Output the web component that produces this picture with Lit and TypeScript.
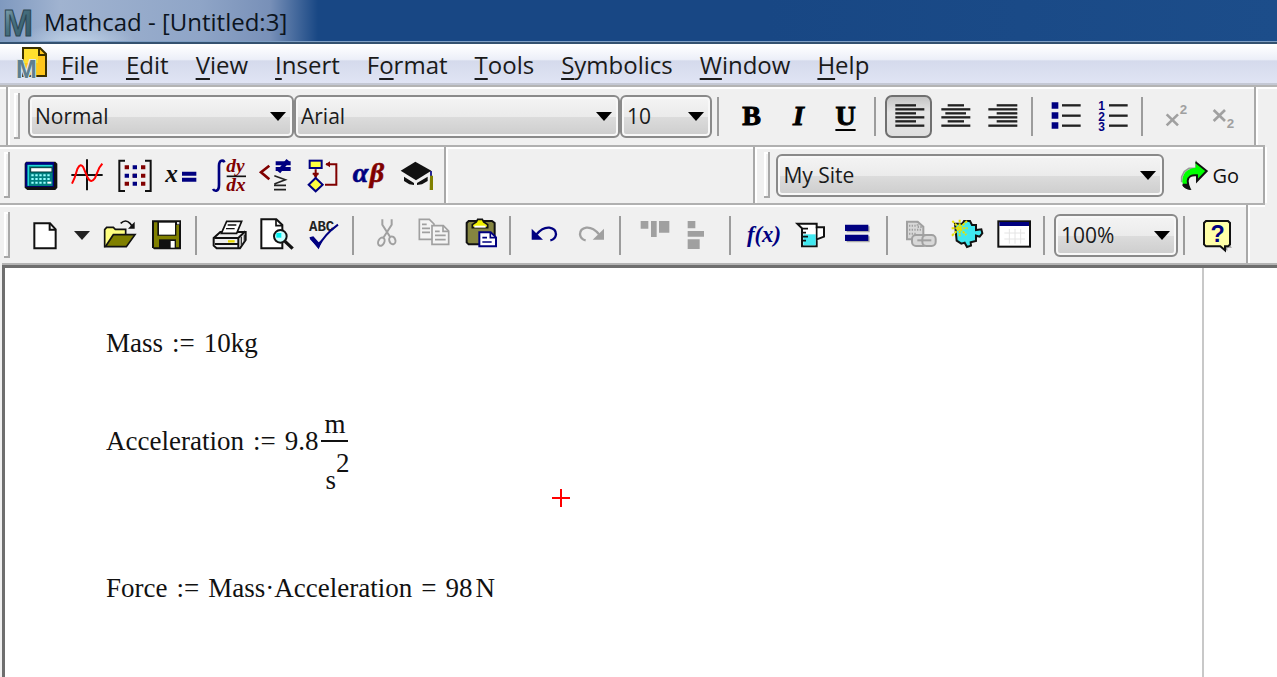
import { LitElement, html, svg, css, SVGTemplateResult, TemplateResult } from "lit";
import { customElement, property } from "lit/decorators.js";

/** Icon drawn on a 108-unit square grid centred on (cx, cy). */
const icon = (cx: number, cy: number, body: SVGTemplateResult) =>
  html`<svg class="icon" viewBox="${cx - 54} ${cy - 54} 108 108" aria-hidden="true">${body}</svg>`;

const lines = (x1: number[], x2: number[], y: number[]) =>
  svg`${y.map((v, i) => svg`<path d="M${x1[i]} ${v}H${x2[i]}" stroke="#222" stroke-width="7"/>`)}`;

const icons = {
  alignLeft: icon(152, 93, lines([111, 111, 111, 111, 111, 111], [173, 198, 173, 198, 173, 198], [61, 73, 85, 97, 109, 122])),
  alignCenter: icon(291, 93, lines([266, 247, 259, 247, 266, 247], [315, 334, 321, 334, 315, 334], [61, 73, 85, 97, 109, 122])),
  alignRight: icon(432, 93, lines([413, 388, 413, 388, 413, 388], [475, 475, 475, 475, 475, 475], [61, 73, 85, 97, 109, 122])),
  bullets: icon(621, 93, svg`
    <path d="M578 52h20v19h-20zM578 82h20v19h-20zM578 112h20v19h-20z" fill="#000080"/>
    ${lines([609, 609, 609], [665, 665, 665], [61, 92, 122])}`),
  numbers: icon(762, 93, svg`
    <g font-family="Liberation Sans" font-weight="bold" font-size="36" fill="#000080" text-anchor="middle">
      <text x="728" y="76">1</text><text x="728" y="107">2</text><text x="728" y="138">3</text></g>
    ${lines([750, 750, 750], [806, 806, 806], [61, 92, 122])}`),
  superscript: icon(951, 93, svg`
    <path d="M923 88L957 121M957 88L923 121" stroke="#a0a0a0" stroke-width="8"/>
    <text x="962" y="88" font-family="Liberation Sans" font-size="40" font-weight="bold" fill="#a0a0a0">2</text>`),
  subscript: icon(1092, 93, svg`
    <path d="M1064 75L1098 108M1098 75L1064 108" stroke="#a0a0a0" stroke-width="8"/>
    <text x="1103" y="130" font-family="Liberation Sans" font-size="40" font-weight="bold" fill="#a0a0a0">2</text>`),

  calculator: icon(120, 273, svg`
    <path d="M78 230h88l6 6v72l-6 7H82l-8-7v-72z" fill="#111"/>
    <path d="M80 231h82v74H76v-70z" fill="#000080"/>
    <rect x="82" y="239" width="76" height="64" fill="#008080"/>
    <path d="M85 302V242H157" fill="none" stroke="#20d8d8" stroke-width="4"/>
    <rect x="92" y="248" width="64" height="13" fill="#fff" stroke="#003a3a" stroke-width="3"/>
    <path d="M94 271h58M94 282h58M94 293h44" stroke="#9ff" stroke-width="6" stroke-dasharray="7 5"/>
    <path d="M142 293h12" stroke="#fff" stroke-width="6"/>`),
  graph: icon(261, 273, svg`
    <path d="M261 223V316M214 270H308" stroke="#111" stroke-width="6"/>
    <path d="M216 296L224 278L232 252Q242 232 250 247L262 276Q273 298 285 279L298 248L307 236" fill="none" stroke="#f00" stroke-width="6"/>`),
  matrix: icon(402, 273, svg`
    <path d="M375 227H358V318H375M435 227H452V318H435" fill="none" stroke="#111" stroke-width="6"/>
    <path d="M374 241h13v12h-13zM398 266h13v12h-13zM374 290h13v12h-13zM423 241h13v12h-13zM423 266h13v12h-13zM423 290h13v12h-13z" fill="#800000"/>
    <path d="M398 241h13v12h-13zM374 266h13v12h-13zM398 266h13v12h-13zM398 290h13v12h-13z" fill="#000080"/>`),
  evaluate: icon(543, 273, svg`
    <text x="496" y="291" font-family="Liberation Serif" font-style="italic" font-weight="bold" font-size="76" fill="#111">x</text>
    <path d="M546 266h43M546 284h43" stroke="#000080" stroke-width="12"/>`),
  calculus: icon(684, 273, svg`
    <path d="M673 232q-2-7-9-5-7 2-7 16v56q0 16-8 18-7 1-10-5" fill="none" stroke="#000080" stroke-width="8"/>
    <g font-family="Liberation Serif" font-style="italic" font-weight="bold" font-size="58" fill="#800000">
      <text x="679" y="262">dy</text><text x="679" y="319">dx</text></g>
    <path d="M680 274h58" stroke="#111" stroke-width="5"/>`),
  boolean: icon(825, 273, svg`
    <path d="M808 242L783 262L808 283" fill="none" stroke="#800000" stroke-width="8"/>
    <path d="M827 235h45M827 252h45" stroke="#000080" stroke-width="12"/>
    <path d="M864 226L836 261" stroke="#000080" stroke-width="12"/>
    <path d="M823 272L856 284L823 297M822 301h36M822 314h36" fill="none" stroke="#222" stroke-width="5"/>`),
  programming: icon(966, 273, svg`
    <rect x="929" y="227" width="36" height="22" fill="#ffff40" stroke="#000080" stroke-width="6"/>
    <path d="M947 253v25M938 266h18M978 238h31v61h-34" fill="none" stroke="#800000" stroke-width="6"/>
    <path d="M976 238l14-9v18zM947 280l-8-12h16z" fill="#800000"/>
    <path d="M947 279l21 20-21 20-21-20z" fill="#ffff40" stroke="#000080" stroke-width="6"/>`),
  greek: icon(1107, 273, svg`
    <g font-family="Liberation Serif" font-style="italic" font-weight="bold" font-size="84">
      <text x="1058" y="291" fill="#000080" stroke="#000080" stroke-width="2">α</text>
      <text x="1109" y="291" fill="#800000" stroke="#800000" stroke-width="2">β</text></g>`),
  symbolic: icon(1248, 273, svg`
    <path d="M1202 257l44-27 48 27-46 29z" fill="#111"/>
    <path d="M1212 275l30 19v6l-14-2-16-10zM1283 275l-32 19v6l15-2 17-10z" fill="#111"/>
    <path d="M1293 258v16" stroke="#000080" stroke-width="5"/>
    <path d="M1290 272h9v43h-10z" fill="#808000"/>`),
  go: icon(1005, 273, svg`
    <path d="M968 292v-16l8-16 14-10h21v-23" fill="none" stroke="#999" stroke-width="5"/>
    <path d="M1010 230l32 28-28 31v-18q-26-4-28 16 2 12 8 23-20-3-24-18-1-40 40-44z" fill="#0f0"/>
    <path d="M1010 232l33 26-29 30v-17q-26-3-28 17 1 14 6 23-15-2-20-12" fill="none" stroke="#111" stroke-width="6"/>
    <path d="M970 296q4 17 24 18l-8-18z" fill="#111"/>`),

  newDoc: icon(132, 90, svg`
    <path d="M100 55h47l17 18v57h-64z" fill="#fff" stroke="#111" stroke-width="6"/>
    <path d="M146 55v19h19" fill="none" stroke="#111" stroke-width="6"/>`),
  open: icon(360, 90, svg`
    <path d="M314 127V74l6-7h20l6 6h31v16" fill="#ffff80" stroke="#111" stroke-width="5"/>
    <path d="M316 125l24-36h65l-26 36z" fill="#808000" stroke="#111" stroke-width="5"/>
    <path d="M362 55q15-14 28 0l8 11" fill="none" stroke="#111" stroke-width="5"/>
    <path d="M404 50v21h-20z" fill="#111"/>`),
  save: icon(498, 90, svg`
    <path d="M453 46h87v87h-81l-6-6z" fill="#111"/>
    <path d="M459 52h10v40h57V60h8v67h-75z" fill="#808000"/>
    <rect x="474" y="53" width="48" height="36" fill="#fff"/>
    <path d="M474 103h51v26h-51z" fill="#111"/>
    <rect x="509" y="108" width="12" height="20" fill="#fff"/>
    <rect x="528" y="51" width="7" height="7" fill="#ddd"/>`),
  print: icon(687, 90, svg`
    <path d="M638 99l20-18h76v24l-17 25h-70l-9-8z" fill="#eee" stroke="#111" stroke-width="6"/>
    <path d="M661 85l16-36h45l-15 36z" fill="#fff" stroke="#111" stroke-width="5"/>
    <path d="M680 60h26M675 71h26" stroke="#111" stroke-width="4"/>
    <path d="M640 99h72l21-20M712 99v30M642 117h70" fill="none" stroke="#111" stroke-width="6"/>
    <path d="M681 109h20" stroke="#e6d800" stroke-width="7"/>
    <path d="M721 95v26M730 89v20" stroke="#333" stroke-width="4"/>`),
  preview: icon(828, 90, svg`
    <path d="M781 43h45l18 17v70h-63z" fill="#fff" stroke="#111" stroke-width="6"/>
    <path d="M825 43v19h18" fill="none" stroke="#111" stroke-width="5"/>
    <circle cx="838" cy="94" r="19" fill="#c8ffff" stroke="#111" stroke-width="6"/>
    <path d="M826 84h15v14h-15z" fill="#0ee"/>
    <path d="M852 109l23 22" stroke="#111" stroke-width="10"/>`),
  spell: icon(969, 90, svg`
    <text x="924" y="77" font-family="Liberation Mono" font-size="42" font-weight="bold" fill="#222">ABC</text>
    <path d="M928 99l24 26q18-36 59-66" fill="none" stroke="#000080" stroke-width="6"/>
    <path d="M925 97l12-3 16 18 12-10-12 31z" fill="#000080"/>`),
  cut: icon(142, 90, svg`
    <g fill="none" stroke="#a0a0a0" stroke-width="6">
      <path d="M128 43v16l24 38M156 43v16l-24 38"/>
      <ellipse cx="125" cy="110" rx="9" ry="13" transform="rotate(25 125 110)"/>
      <ellipse cx="158" cy="106" rx="9" ry="12" transform="rotate(-20 158 106)"/></g>`),
  copy: icon(283, 90, svg`
    <g fill="#f4f4f4" stroke="#a0a0a0" stroke-width="5">
      <path d="M239 43h30l14 14v46h-44z"/><path d="M247 58h14M247 70h24M247 82h24"/>
      <path d="M277 62h34l16 16v40h-50z"/><path d="M310 62v17h17M286 79h14M286 91h32M286 104h32" fill="none"/></g>`),
  paste: icon(424, 90, svg`
    <path d="M381 54l6-6h70l8 6v64H387l-6-6z" fill="#858540" stroke="#111" stroke-width="6"/>
    <path d="M398 68v-9l12-8 4-8h14l4 8 12 8v9z" fill="#f0f000" stroke="#111" stroke-width="5"/>
    <path d="M404 65h34" stroke="#fff" stroke-width="6"/>
    <path d="M419 82h34l16 15v27h-50z" fill="#fff" stroke="#000080" stroke-width="6"/>
    <path d="M452 82v16h17M428 98h14M428 111h28" fill="none" stroke="#000080" stroke-width="5"/>`),
  undo: icon(610, 90, svg`
    <path d="M573 71v33h34z" fill="#000080"/>
    <path d="M588 88q18-22 38-20 20 3 20 20-2 15-17 18" fill="none" stroke="#000080" stroke-width="7"/>`),
  redo: icon(751, 90, svg`
    <path d="M790 71v33h-34z" fill="#a0a0a0"/>
    <path d="M775 88q-18-22-38-20-19 3-19 20 2 15 17 18" fill="none" stroke="#a0a0a0" stroke-width="7"/>`),
  alignTop: icon(940, 90, svg`<path d="M900 48h23v23h-23zM931 48h17v48h-17zM955 48h31v35h-31z" fill="#a0a0a0"/>`),
  alignSide: icon(1081, 90, svg`<path d="M1041 48h23v22h-23zM1041 78h49v17h-49zM1041 103h36v29h-36z" fill="#a0a0a0"/>`),
  fx: icon(195, 90, svg`
    <text x="195" y="111" text-anchor="middle" font-family="Liberation Serif" font-style="italic" font-weight="bold" font-size="68" fill="#000080">f(x)</text>`),
  units: icon(336, 90, svg`
    <path d="M295 56h58v11h22v28l-22 8v21h-44V70z" fill="#fff" stroke="#111" stroke-width="6"/>
    <path d="M313 88h37v33h-37z" fill="#40e8f0"/>
    <path d="M353 67v36M309 71h18M309 83h12M309 95h18M309 107h12" fill="none" stroke="#111" stroke-width="5"/>`),
  equals: icon(477, 90, svg`
    <path d="M443 64h69v18h-69zM443 94h69v18h-69z" fill="#aaa"/>
    <path d="M438 59h70v19h-70zM438 89h70v19h-70z" fill="#000080"/>`),
  link: icon(668, 90, svg`
    <g fill="#d8d8d8" stroke="#a0a0a0" stroke-width="6">
      <path d="M626 50h32l17 15v38h-49z"/>
      <path d="M658 50v16h17M632 62h20M632 74h36M632 86h20" fill="none" stroke-dasharray="4 4"/>
      <rect x="641" y="90" width="46" height="33" rx="12"/><rect x="672" y="90" width="40" height="33" rx="12"/>
      <path d="M657 106h42"/></g>`),
  component: icon(809, 90, svg`
    <path d="M770 56h22l5-8h18l6 12h12v15l16-2 3 12-8 10-11-3v16l-16 4 1 10-12 4-7-13-10 3-14-9z" fill="#40e8f0" stroke="#111" stroke-width="6"/>
    <path d="M762 48l42 42M806 48l-45 44M784 44v50M760 70h48" stroke="#e8e000" stroke-width="6" stroke-dasharray="8 3"/>`),
  window: icon(950, 90, svg`
    <rect x="900" y="49" width="95" height="76" fill="#fff" stroke="#111" stroke-width="6"/>
    <path d="M903 57h89" stroke="#000080" stroke-width="12"/>
    <path d="M918 84h62M918 102h62M933 72v44M950 72v44M967 72v44" stroke="#e4e4e4" stroke-width="3"/>`),
  help: icon(535, 90, svg`
    <path d="M499 52h74v72l4 4h-14v10l-10-8z" fill="#999"/>
    <path d="M499 48h66l6 6v64l-6 6h-9v12l-14-12h-43l-6-6V54z" fill="#ffffa8" stroke="#111" stroke-width="6"/>
    <text x="534" y="111" text-anchor="middle" font-family="Liberation Sans" font-weight="bold" font-size="70" fill="#000080">?</text>`),
};

/** Drop-down list with the bevelled toolbar look. */
@customElement("tool-combo")
class ToolCombo extends LitElement {
  @property() label = "";
  @property({ type: Array }) options: string[] = [];

  static styles = css`
    :host { display: block; flex: none; }
    .combo { display: grid; align-items: center; height: 43px; }
    select {
      grid-area: 1 / 1; width: 100%; height: 43px; margin: 0; padding: 0 36px 0 5px;
      appearance: none; outline: 0; box-sizing: border-box;
      border: 2px solid #8a8a8a; border-radius: 6px;
      box-shadow: inset 0 0 0 2px #f8f8f8;
      background: linear-gradient(#f4f4f4, #ebebeb 50%, #dcdcdc 51%, #cdcdcd);
      font: 21px/28px "Open Sans", "Noto Sans", sans-serif; color: #1a1a1a;
    }
    .arrow { grid-area: 1 / 1; justify-self: end; width: 16px; height: 9px; margin-right: 8px; pointer-events: none; }
  `;

  render() {
    return html`<div class="combo">
      <select aria-label=${this.label}>${this.options.map((o) => html`<option>${o}</option>`)}</select>
      <svg class="arrow" viewBox="0 0 16 9" aria-hidden="true"><path d="M0 0H16L8 9Z" fill="#000"/></svg>
    </div>`;
  }
}

@customElement("app-root")
class AppRoot extends LitElement {
  static styles = css`
    :host {
      display: flex; flex-direction: column; min-height: 100vh; overflow: hidden;
      font-family: "Open Sans", "Noto Sans", sans-serif; color: #1a1a1a; background: #f0f0f0;
    }
    .title {
      display: flex; align-items: center; gap: 9px; height: 42px; padding-left: 2px;
      border-bottom: 2px solid #34516f; box-shadow: inset 0 -1px #7f9fc4;
      background:
        radial-gradient(ellipse 60px 22px at 76px 44px, #c9dcefcc, #c9dcef00),
        linear-gradient(90deg, #7f99bf 0, #a0b3d0 60px, #8fa5c7 200px, #7890b8 270px, #184784 318px, #184784 60%, #1c4d8a);
    }
    h1 { margin: 0; padding-top: 2px; font-size: 24px; line-height: 32px; font-weight: 400; color: #0c1420; }
    .logo { width: 33px; height: 42px; }
    .menu {
      display: flex; align-items: center; gap: 27px; height: 36px; padding: 2px 0 0 15px;
      border-top: 1px solid #fff; border-bottom: 2px solid #c4c8d4;
      background: linear-gradient(#fff, #eceff8 38%, #d5daec 42%, #e0e4f4);
    }
    .menu svg { width: 32px; height: 38px; margin-right: -13px; }
    .menu button { font-size: 24px; line-height: 32px; }
    u { text-decoration-thickness: 2px; text-underline-offset: 4px; }
    button {
      display: flex; align-items: center; justify-content: center; padding: 0;
      border: 0; background: none; font: inherit; color: inherit;
    }
    .bars { border-top: 2px solid #b4b4b4; box-shadow: inset 0 2px #fff; }
    .bar {
      display: flex; align-items: center; box-sizing: border-box; height: 58px; margin-right: 12px;
      border-bottom: 2px solid #b0b0b0; box-shadow: 0 2px #fff;
    }
    .bar.format { height: 60px; padding-left: 6px; }
    .bar.standard { height: 60px; border-bottom: 0; box-shadow: none; }
    .edge { flex: none; align-self: stretch; width: 2px; background: #a8a8a8; box-shadow: 2px 0 #fff; }
    .grip {
      flex: none; box-sizing: border-box; width: 6px; height: 46px; margin: 0 6px 0 4px;
      border: solid #a8a8a8; border-width: 0 2px 2px 0; box-shadow: inset 2px 2px #fff;
    }
    .format .grip { margin-left: 6px; margin-right: 8px; }
    .sep { flex: none; width: 2px; height: 39px; margin: 0 9px 0 5px; background: #9c9c9c; }
    .tool { flex: none; width: 47px; height: 44px; }
    .tool.drop { width: 28px; }
    .icon { width: 36px; height: 36px; }
    .math-tools .tool, .math-tools .go { padding-top: 2px; }
    .drop svg { width: 16px; height: 9px; }
    .letter { font: bold 28px/32px "Liberation Serif", serif; color: #000; -webkit-text-stroke: 1px #000; }
    .italic { font-style: italic; }
    .on {
      box-sizing: border-box; border: 2px solid #707070; border-radius: 7px; height: 43px;
      background: linear-gradient(#c4c4c4, #e6e6e6 40%, #dedede);
    }
    .style { width: 266px; }
    .font { width: 326px; }
    .size { width: 92px; }
    .site { width: 388px; }
    .zoom { width: 124px; }
    .fill { flex: 1; }
    .gap { flex: none; width: 5px; }
    .tail { flex: none; width: 9px; }
    .go { margin: 0 24px 0 12px; font-size: 20px; line-height: 28px; color: #111; }
    .sheet {
      position: relative; flex: 1; display: flex; margin-left: 2px; background: #fff;
      border: solid #6e6e6e; border-width: 3px 0 0 3px; box-shadow: 0 -2px #b4b4b4;
    }
    .page {
      flex: 1; margin-right: 73px; padding: 57px 0 0 101px; border-right: 2px solid #c8c8c8;
      font: 27px/36px "Liberation Serif", serif; color: #111;
    }
    .math { display: flex; align-items: center; gap: 9px; height: 36px; }
    .math + .math { margin-top: 62px; }
    .math.wide { margin-top: 111px; }
    .value { display: flex; align-items: center; gap: 3px; }
    .fraction { display: grid; justify-items: center; }
    .over { height: 28px; line-height: 24px; width: 27px; text-align: center; box-sizing: border-box; }
    .under { display: flex; border-top: 2px solid #111; width: 27px; height: 30px; padding-left: 4px; box-sizing: border-box; }
    .under .base { line-height: 76px; }
    .under .power { line-height: 42px; }
    .cross { position: absolute; left: 547px; top: 221px; width: 18px; height: 18px; }
  `;

  private tool(label: string, glyph: TemplateResult, cls = "") {
    return html`<button class="tool ${cls}" aria-label=${label}>${glyph}</button>`;
  }

  private menuItem(text: string, key = 0) {
    return html`<button>${text.slice(0, key)}<u>${text[key]}</u>${text.slice(key + 1)}</button>`;
  }

  render() {
    const sep = html`<span class="sep"></span>`;
    const edge = html`<span class="edge"></span>`;
    const grip = html`<span class="grip"></span>`;
    return html`
      <header class="title">
        <svg class="logo" viewBox="0 0 33 42" aria-hidden="true">
          <defs><linearGradient id="steel" x1="0" y1="0" x2="1" y2="1">
            <stop offset="0" stop-color="#9db7c2"/><stop offset="0.400" stop-color="#47707f"/><stop offset="1" stop-color="#2f5363"/>
          </linearGradient></defs>
          <text x="1" y="36" font-family="Liberation Sans" font-weight="bold" font-size="36" fill="url(#steel)" stroke="#2b4552" stroke-width="1">M</text>
        </svg>
        <h1>Mathcad - [Untitled:3]</h1>
      </header>
      <nav class="menu">
        <svg viewBox="0 0 32 38" aria-hidden="true">
          <path d="M8 2H25L31 8V30H8Z" fill="#ffc61c" stroke="#3a3000" stroke-width="2"/>
          <path d="M9 3H23V17H9Z" fill="#ffe02e"/>
          <path d="M24 2V9H31" fill="none" stroke="#3a3000" stroke-width="2"/>
          <text x="1" y="32" font-family="Liberation Sans" font-weight="bold" font-size="25" fill="#5d7f8f" stroke="#dfe8ee" stroke-width="2" paint-order="stroke">M</text>
        </svg>
        ${this.menuItem("File")}${this.menuItem("Edit")}${this.menuItem("View")}${this.menuItem("Insert")}
        ${this.menuItem("Format", 1)}${this.menuItem("Tools")}${this.menuItem("Symbolics")}
        ${this.menuItem("Window")}${this.menuItem("Help")}
      </nav>
      <div class="bars">
        <div class="bar format">
          ${edge}${grip}
          <tool-combo class="style" label="Style" .options=${["Normal"]}></tool-combo>
          <tool-combo class="font" label="Font" .options=${["Arial"]}></tool-combo>
          <tool-combo class="size" label="Font size" .options=${["10"]}></tool-combo>
          ${sep}
          ${this.tool("Bold", html`<span class="letter">B</span>`)}
          ${this.tool("Italic", html`<span class="letter italic">I</span>`)}
          ${this.tool("Underline", html`<u class="letter">U</u>`)}
          ${sep}
          ${this.tool("Align left", icons.alignLeft, "on")}
          ${this.tool("Align centre", icons.alignCenter)}
          ${this.tool("Align right", icons.alignRight)}
          ${sep}
          ${this.tool("Bullets", icons.bullets)}${this.tool("Numbering", icons.numbers)}
          ${sep}
          ${this.tool("Superscript", icons.superscript)}${this.tool("Subscript", icons.subscript)}
          <span class="fill"></span>${edge}<span class="tail"></span>
        </div>
        <div class="bar math-tools">
          ${grip}
          ${this.tool("Calculator", icons.calculator)}${this.tool("Graph", icons.graph)}
          ${this.tool("Matrix", icons.matrix)}${this.tool("Evaluation", icons.evaluate)}
          ${this.tool("Calculus", icons.calculus)}${this.tool("Boolean", icons.boolean)}
          ${this.tool("Programming", icons.programming)}${this.tool("Greek", icons.greek)}
          ${this.tool("Symbolic", icons.symbolic)}
          <span class="gap"></span>${edge}
          <span class="fill"></span>
          ${edge}<span class="gap"></span>${grip}
          <tool-combo class="site" label="Site" .options=${["My Site"]}></tool-combo>
          <button class="go">${icons.go}Go</button>
          ${edge}
        </div>
        <div class="bar standard">
          ${grip}<span class="gap"></span>
          ${this.tool("New", icons.newDoc)}
          ${this.tool("New from template", html`<svg viewBox="0 0 16 9" aria-hidden="true"><path d="M0 0H16L8 9Z" fill="#222"/></svg>`, "drop")}
          ${this.tool("Open", icons.open)}${this.tool("Save", icons.save)}
          ${sep}
          ${this.tool("Print", icons.print)}${this.tool("Print preview", icons.preview)}${this.tool("Spelling", icons.spell)}
          ${sep}
          ${this.tool("Cut", icons.cut)}${this.tool("Copy", icons.copy)}${this.tool("Paste", icons.paste)}
          ${sep}
          ${this.tool("Undo", icons.undo)}${this.tool("Redo", icons.redo)}
          ${sep}
          ${this.tool("Align across", icons.alignTop)}${this.tool("Align down", icons.alignSide)}
          ${sep}
          ${this.tool("Insert function", icons.fx)}${this.tool("Insert unit", icons.units)}${this.tool("Calculate", icons.equals)}
          ${sep}
          ${this.tool("Insert hyperlink", icons.link)}${this.tool("Component", icons.component)}${this.tool("Window", icons.window)}
          ${sep}
          <tool-combo class="zoom" label="Zoom" .options=${["100%"]}></tool-combo>
          ${sep}
          ${this.tool("Help", icons.help)}
          <span class="gap"></span>${edge}
        </div>
      </div>
      <main class="sheet">
        <div class="page">
          <div class="math"><span>Mass</span><span>:=</span><span>10kg</span></div>
          <div class="math">
            <span>Acceleration</span><span>:=</span>
            <span class="value"><span>9.8</span>
              <span class="fraction">
                <span class="over">m</span>
                <span class="under"><span class="base">s</span><span class="power">2</span></span>
              </span>
            </span>
          </div>
          <div class="math wide">
            <span>Force</span><span>:=</span>
            <span>Mass·Acceleration</span><span>=</span>
            <span class="value"><span>98</span><span>N</span></span>
          </div>
        </div>
        <svg class="cross" viewBox="0 0 18 18" aria-hidden="true"><path d="M0 9H18M9 0V18" stroke="#f00" stroke-width="2"/></svg>
      </main>
    `;
  }
}
